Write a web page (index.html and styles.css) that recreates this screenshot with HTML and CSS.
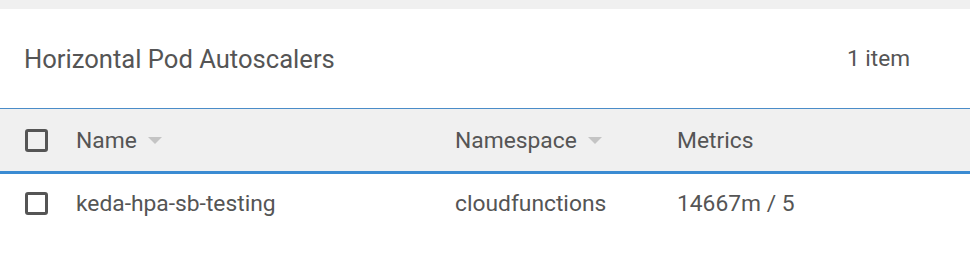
FILE: index.html
```html
<!DOCTYPE html>
<html lang="en">
<head>
  <meta charset="UTF-8" />
  <title>Horizontal Pod Autoscalers</title>
  <link rel="stylesheet" href="styles.css">
</head>
<body>
  <!-- HPA list card -->
  <div class="card">
    <div class="card-header">
      <h1 class="card-title">Horizontal Pod Autoscalers</h1>
      <span class="item-count">1 item</span>
    </div>

    <div class="table">
      <div class="row header-row">
        <div class="cell"><span class="checkbox"></span></div>
        <div class="cell">Name
          <svg class="sort-arrow" width="14" height="7" viewBox="0 0 14 7"><path d="M0 0h14L7 7z"/></svg>
        </div>
        <div class="cell">Namespace
          <svg class="sort-arrow" width="14" height="7" viewBox="0 0 14 7"><path d="M0 0h14L7 7z"/></svg>
        </div>
        <div class="cell">Metrics</div>
      </div>

      <div class="row data-row">
        <div class="cell"><span class="checkbox"></span></div>
        <div class="cell">keda-hpa-sb-testing</div>
        <div class="cell">cloudfunctions</div>
        <div class="cell">14667m / 5</div>
      </div>
    </div>
  </div>
</body>
</html>
```

FILE: styles.css
```css
/* Global Styles */
body {
  margin: 0;
  padding: 0;
  font-family: Roboto, "Noto Sans", sans-serif;
  background: #f0f0f0;
  color: #555;
}
/* Card */
.card {
  margin-top: 9px;
  background-color: #fff;
  min-height: 250px;
}
.card-header {
  display: flex;
  justify-content: space-between;
  align-items: center;
  height: 99px;
  padding: 0 60px 0 24px;
  border-bottom: 1px solid #4a8cc8;
}
.card-title {
  margin: 0;
  font-size: 25.6px;
  font-weight: 400;
}
.item-count {
  font-size: 22.6px;
}
/* Table */
.row {
  display: grid;
  grid-template-columns: 51px 379px 222px 1fr;
  align-items: center;
  padding-left: 25px;
  font-size: 22.8px;
}
.header-row {
  height: 62px;
  background-color: #f0f0f0;
  border-bottom: 3px solid #3a8bd2;
}
.data-row {
  height: 58px;
}
.cell {
  display: flex;
  align-items: center;
  white-space: nowrap;
}
.checkbox {
  display: inline-block;
  width: 23px;
  height: 23px;
  box-sizing: border-box;
  border: 3px solid #555;
  border-radius: 3px;
}
.sort-arrow {
  margin-left: 11px;
  fill: #c4c4c4;
}
```
